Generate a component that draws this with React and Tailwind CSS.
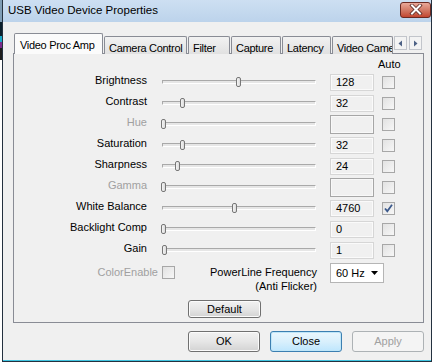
import React from 'react';

const rows = [
  { label: 'Brightness', value: '128', frac: 128 / 255 },
  { label: 'Contrast', value: '32', frac: 32 / 255 },
  { label: 'Hue', value: '', frac: 0, disabled: true },
  { label: 'Saturation', value: '32', frac: 32 / 255 },
  { label: 'Sharpness', value: '24', frac: 24 / 255 },
  { label: 'Gamma', value: '', frac: 0, disabled: true },
  { label: 'White Balance', value: '4760', frac: 0.475, auto: true },
  { label: 'Backlight Comp', value: '0', frac: 0 },
  { label: 'Gain', value: '1', frac: 0.006 },
];

const tabs = [
  { name: 'Camera Control', w: 'w-[83px]' },
  { name: 'Filter', w: 'w-[42px]' },
  { name: 'Capture', w: 'w-[50px]' },
  { name: 'Latency', w: 'w-[49px]' },
  { name: 'Video Camera', w: 'w-[61px]' },
];

function Checkbox({ checked }) {
  return (
    <div className="w-[13px] h-[13px] border border-[#a7a7a7] bg-gradient-to-br from-[#e2e2e2] to-[#f7f7f7] flex items-center justify-center">
      {checked && (
        <svg width="11" height="11" viewBox="0 0 11 11">
          <path d="M2 5.5 L4.3 8.2 L9 1.8" fill="none" stroke="#3c5a8c" strokeWidth="1.8" />
        </svg>
      )}
    </div>
  );
}

function Slider({ frac }) {
  return (
    <div className="relative w-[158px] h-[10px] mb-[2px]">
      <div className="absolute left-[2px] right-[2px] top-[3px] h-[4px] border-t border-l border-[#a9a9a9] border-b border-r border-b-white border-r-white bg-[#e6e6e6]" />
      <div
        className="absolute top-0 w-[5px] h-[10px] rounded-[2px] border border-[#777777] bg-gradient-to-r from-[#f4f4f4] to-[#dcdcdc]"
        style={{ left: `${1 + frac * 149}px` }}
      />
    </div>
  );
}

function WinButton({ children, variant, className = '' }) {
  const look =
    variant === 'focus'
      ? 'border-[#3c7fb1] shadow-[inset_0_0_0_1px_#bfe6f8] bg-gradient-to-b from-[#eaf6fd] via-[#d9f0fc] to-[#bee6fd] text-black'
      : variant === 'disabled'
      ? 'border-[#adb2b5] bg-[#f4f4f4] text-[#a0a0a0]'
      : 'border-[#707070] shadow-[inset_0_0_0_1px_#fbfbfb] bg-gradient-to-b from-[#f2f2f2] via-[#e6e6e6] to-[#d3d3d3] text-black';
  return (
    <div className={`border rounded-[3px] flex items-center justify-center text-[11px] ${look} ${className}`}>
      {children}
    </div>
  );
}

export default function App() {
  return (
    <div className="w-[435px] h-[363px] bg-white flex overflow-hidden font-['Liberation_Sans',Arial,sans-serif] text-[11px] text-black">
      {/* desktop edge behind the window */}
      <div className="w-[2px] h-[363px] flex flex-col">
        <div className="h-[22px] bg-[#7f9db5]" />
        <div className="h-[14px] bg-[#0b1f2b]" />
        <div className="h-[6px] bg-[#19a9c9]" />
        <div className="h-[6px] bg-[#7a2a8a]" />
        <div className="h-[12px] bg-[#1c1c1c]" />
        <div className="flex-1 bg-white" />
      </div>

      <div className="w-[430px] h-[362px] border-x border-b border-[#24313f] flex flex-col">
        {/* title bar */}
        <div className="h-[22px] bg-gradient-to-b from-[#cddff2] to-[#bcd3eb] flex items-center justify-between pl-[5px]">
          <span className="text-[11.5px] leading-none text-black">USB Video Device Properties</span>
          <div className="w-[31px] h-[16px] mb-[3px] rounded-[3px] border border-[#6b2a22] bg-gradient-to-b from-[#e9a899] via-[#d27a66] to-[#c2452f] flex items-center justify-center">
            <svg width="14" height="11" viewBox="0 0 14 11">
              <path d="M3 1.5 L11 9.5 M11 1.5 L3 9.5" stroke="#5a2a24" strokeWidth="3.6" strokeLinecap="square" />
              <path d="M3 1.5 L11 9.5 M11 1.5 L3 9.5" stroke="#ffffff" strokeWidth="2" strokeLinecap="square" />
            </svg>
          </div>
        </div>

        {/* client area */}
        <div className="flex-1 bg-[#f0f0f0] pl-[10px] pt-[11px] border-b border-[#3fc4e0] flex flex-col">
          {/* tab strip */}
          <div className="relative z-10 flex items-end h-[21px] w-[411px]">
            <div className="ml-[1px] w-[89px] h-[21px] bg-[#fbfbfb] border-x border-t border-[#898c95] rounded-t-[2px] pl-[5px] pt-[3px] whitespace-nowrap tracking-[-0.3px]">
              Video Proc Amp
            </div>
            {tabs.map((t) => (
              <div
                key={t.name}
                className={`${t.w} h-[18px] ml-px border-x border-t border-[#898c95] rounded-t-[2px] bg-gradient-to-b from-[#f2f2f2] to-[#e1e1e1] pl-[4px] pt-[3px] whitespace-nowrap overflow-hidden tracking-[-0.3px]`}
              >
                {t.name}
              </div>
            ))}
            <div className="ml-px mb-[4px] flex gap-[2px]">
              <div className="w-[13px] h-[14px] border border-[#c2c5cb] bg-[#f3f3f3] flex items-center justify-center">
                <svg width="5" height="7" viewBox="0 0 5 7"><path d="M4 0.5 L0.5 3.5 L4 6.5 Z" fill="#4d6185" /></svg>
              </div>
              <div className="w-[13px] h-[14px] border border-[#c2c5cb] bg-[#f3f3f3] flex items-center justify-center">
                <svg width="5" height="7" viewBox="0 0 5 7"><path d="M1 0.5 L4.5 3.5 L1 6.5 Z" fill="#4d6185" /></svg>
              </div>
            </div>
          </div>

          {/* tab panel */}
          <div className="-mt-px w-[411px] h-[270px] border border-[#898c95] bg-[#f0f0f0] flex flex-col">
            <div className="pt-[3px] h-[18px] flex">
              <div className="ml-[364px] h-[15px] flex items-center">Auto</div>
            </div>

            {rows.map((r) => (
              <div key={r.label} className="h-[21px] flex items-center">
                <div className={`w-[133px] text-right mb-[4px] leading-[13px] ${r.disabled ? 'text-[#a0a0a0]' : 'text-black'}`}>
                  {r.label}
                </div>
                <div className="ml-[13px]">
                  <Slider frac={r.frac} />
                </div>
                <div
                  className={`ml-[12px] w-[44px] pl-[5px] flex items-center ${
                    r.disabled ? 'border border-[#a6a6a6] shadow-[inset_0_0_0_1px_#f8f8f8] h-[19px]' : 'border border-[#d6d6d6] shadow-[inset_0_0_0_1px_#fafafa] h-[17px]'
                  }`}
                >
                  {r.value}
                </div>
                <div className="ml-[8px]">
                  <Checkbox checked={r.auto} />
                </div>
              </div>
            ))}

            {/* color enable / powerline row */}
            <div className="h-[32px] flex items-start">
              <div className="w-[144px] pt-[5px] text-right leading-[13px] text-[#a0a0a0]">ColorEnable</div>
              <div className="ml-[4px] mt-[5px]">
                <Checkbox />
              </div>
              <div className="w-[142px] pt-[4px] text-right leading-[14px]">
                <div>PowerLine Frequency</div>
                <div>(Anti Flicker)</div>
              </div>
              <div className="ml-[13px] mt-[2px] w-[54px] h-[20px] bg-white border border-[#b5b5b5] flex items-center justify-between pl-[5px] pr-[5px]">
                <span>60 Hz</span>
                <svg width="7" height="4" viewBox="0 0 7 4"><path d="M0 0 L7 0 L3.5 4 Z" fill="#000" /></svg>
              </div>
            </div>

            <div className="mt-[7px] ml-[174px]">
              <WinButton className="w-[73px] h-[18px]">Default</WinButton>
            </div>
          </div>

          {/* dialog buttons */}
          <div className="mt-[8px] w-[411px] flex justify-end gap-[10px]">
            <WinButton className="w-[72px] h-[21px]">OK</WinButton>
            <WinButton variant="focus" className="w-[72px] h-[21px]">Close</WinButton>
            <WinButton variant="disabled" className="w-[72px] h-[21px]">Apply</WinButton>
          </div>
        </div>
      </div>
    </div>
  );
}
